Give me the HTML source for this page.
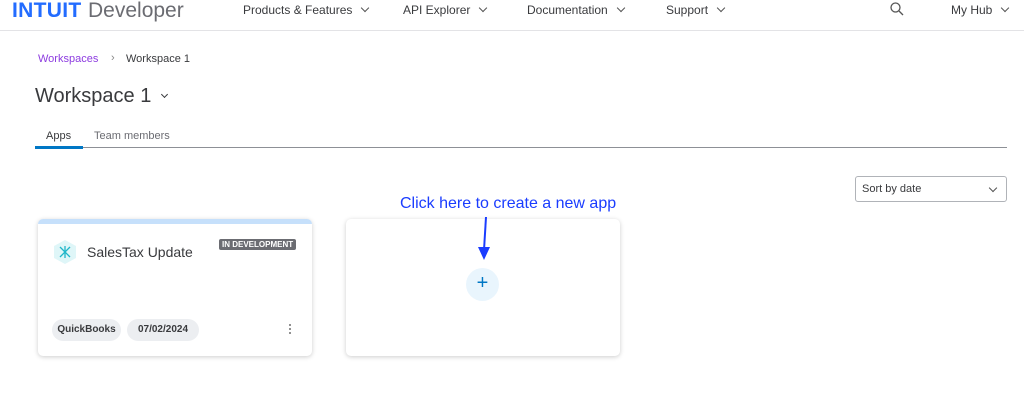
<!DOCTYPE html>
<html><head><style>
*{margin:0;padding:0;box-sizing:border-box}
body{width:1024px;height:408px;background:#fff;font-family:"Liberation Sans",Arial,sans-serif;position:relative;overflow:hidden;color:#393a3d}
.a{position:absolute;white-space:nowrap}
.chev{display:inline-block;width:6px;height:6px;border-right:1.3px solid #555;border-bottom:1.3px solid #555;transform:rotate(45deg);margin-left:10px;position:relative;top:-3px}
.nav{font-size:12px;color:#393a3d;top:3px}
.card{position:absolute;background:#fff;border-radius:5px;box-shadow:0 1px 5px rgba(0,0,0,.2)}
.pill{position:absolute;background:#eceef1;border-radius:11px;font-size:10px;font-weight:bold;color:#393a3d;height:22px;line-height:22px;text-align:center}
</style></head><body>
<div class="a" style="left:12px;top:-1px;font-size:21px;font-weight:bold;color:#236cff;letter-spacing:0.3px">INTUIT</div>
<div class="a" style="left:88px;top:-1px;font-size:21px;color:#6b6c72">Developer</div>
<div class="a nav" style="left:243px">Products &amp; Features<span class="chev"></span></div>
<div class="a nav" style="left:403px">API Explorer<span class="chev"></span></div>
<div class="a nav" style="left:527px">Documentation<span class="chev"></span></div>
<div class="a nav" style="left:666px">Support<span class="chev"></span></div>
<svg class="a" style="left:889px;top:1px" width="16" height="16" viewBox="0 0 16 16"><circle cx="6.5" cy="6.5" r="4.5" fill="none" stroke="#555" stroke-width="1.3"/><line x1="10" y1="10" x2="14" y2="14" stroke="#555" stroke-width="1.3"/></svg>
<div class="a nav" style="left:951px">My Hub<span class="chev"></span></div>
<div class="a" style="left:0;top:30px;width:1024px;height:1px;background:#e3e3e6"></div>

<div class="a" style="left:38px;top:53px;font-size:11px;color:#8d3ce0">Workspaces</div>
<div class="a" style="left:111px;top:52px;font-size:11px;color:#888">›</div>
<div class="a" style="left:126px;top:53px;font-size:11px;color:#393a3d">Workspace 1</div>
<div class="a" style="left:35px;top:85px;font-size:20px;color:#393a3d">Workspace 1<span class="chev" style="border-color:#393a3d;border-width:1.8px;width:5px;height:5px;margin-left:11px;top:-5px"></span></div>
<div class="a" style="left:46px;top:130px;font-size:11px;color:#393a3d">Apps</div>
<div class="a" style="left:94px;top:130px;font-size:11px;color:#6b6c72">Team members</div>
<div class="a" style="left:35px;top:147px;width:972px;height:1px;background:#8d9096"></div>
<div class="a" style="left:35px;top:146px;width:48px;height:3px;background:#0077c5"></div>

<div class="a" style="left:855px;top:176px;width:152px;height:26px;border:1px solid #b0b3b8;border-radius:3px;font-size:11px;line-height:24px;padding-left:6px;color:#393a3d">Sort by date<span class="chev" style="position:absolute;right:10px;top:8px;margin:0"></span></div>

<div class="card" style="left:38px;top:219px;width:274px;height:137px;overflow:hidden">
<div style="height:5px;background:#c6e0fb"></div>
<svg style="position:absolute;left:14px;top:20px" width="26" height="26" viewBox="0 0 26 26"><polygon points="13,1 24,7 24,19 13,25 2,19 2,7" fill="#dff6f8"/><g stroke="#1fb6c9" stroke-width="1.3"><line x1="8" y1="18" x2="18" y2="8"/><line x1="8" y1="8" x2="18" y2="18"/><line x1="13" y1="7" x2="13" y2="19"/></g></svg>
<div class="a" style="left:49px;top:25px;font-size:14px;color:#393a3d">SalesTax Update</div>
<div class="a" style="left:181px;top:20px;background:#6b6c72;color:#fff;font-size:8px;font-weight:bold;padding:1px 3px;border-radius:2px">IN DEVELOPMENT</div>
<div class="pill" style="left:14px;top:100px;width:69px">QuickBooks</div>
<div class="pill" style="left:89px;top:100px;width:72px">07/02/2024</div>
<div class="a" style="left:251px;top:104px;width:2px;height:11px;background:radial-gradient(circle,#888 1px,transparent 1.2px) 0 0/2px 4px"></div>
</div>

<div class="card" style="left:346px;top:219px;width:274px;height:137px"></div>
<div class="a" style="left:466px;top:268px;width:33px;height:33px;border-radius:50%;background:#e9f5fd;color:#0077c5;font-size:20px;line-height:31px;text-align:center">+</div>
<div class="a" style="left:400px;top:195px;font-size:16px;color:#1a3cff">Click here to create a new app</div>
<svg class="a" style="left:474px;top:214px" width="20" height="48"><line x1="12" y1="3" x2="10" y2="36" stroke="#1a3cff" stroke-width="2"/><polygon points="4,33 16,33 10,46" fill="#1a3cff"/></svg>
</body></html>
